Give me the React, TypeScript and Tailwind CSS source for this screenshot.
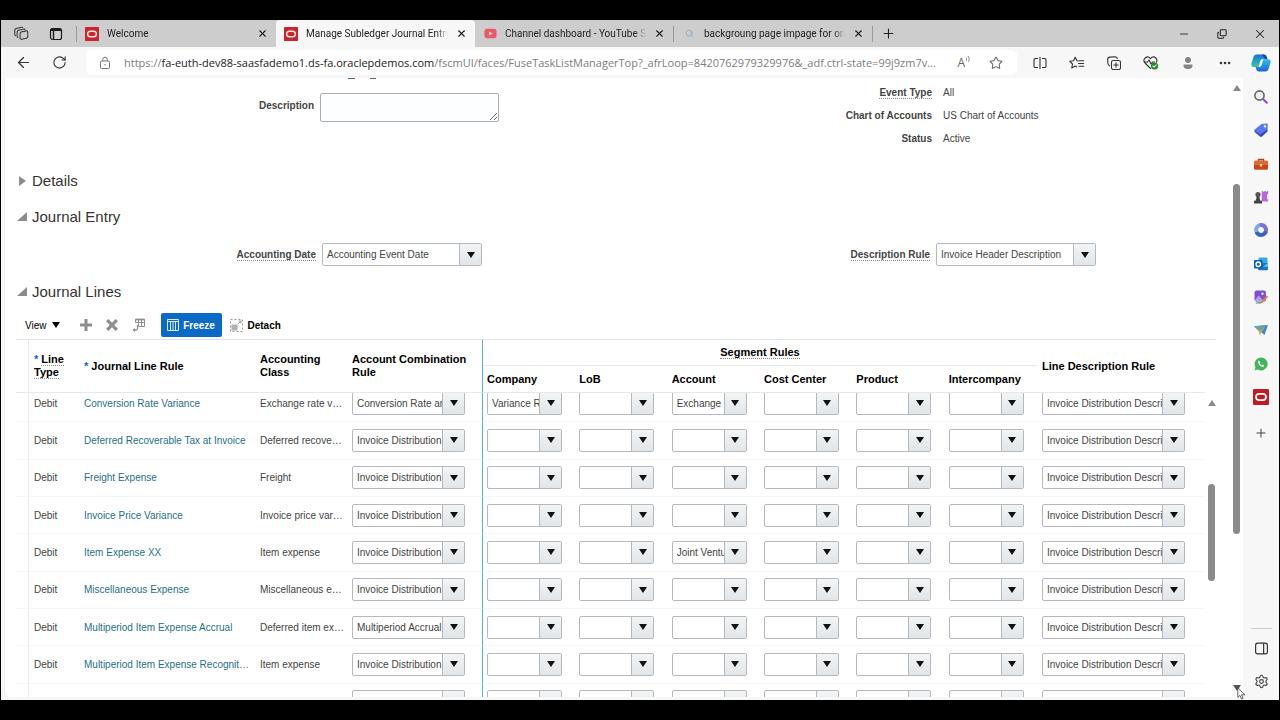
import React from 'react';
import { ArrowLeft, Copy, Ellipsis, Minus, Plus, RotateCw, Search, Settings, Star, X } from 'lucide-react';

// One line of the subledger journal entry rule set
interface JournalLine {
  rule: string;
  accountingClass: string;
  combination: string;
  company?: string;
  account?: string;
}

const journalLines: JournalLine[] = [
  {
    rule: 'Conversion Rate Variance',
    accountingClass: 'Exchange rate variance',
    combination: 'Conversion Rate and Invoice',
    company: 'Variance Rule',
    account: 'Exchange Rate',
  },
  { rule: 'Deferred Recoverable Tax at Invoice', accountingClass: 'Deferred recoverable tax', combination: 'Invoice Distribution Account' },
  { rule: 'Freight Expense', accountingClass: 'Freight', combination: 'Invoice Distribution Account' },
  { rule: 'Invoice Price Variance', accountingClass: 'Invoice price variance', combination: 'Invoice Distribution Account' },
  { rule: 'Item Expense XX', accountingClass: 'Item expense', combination: 'Invoice Distribution Account', account: 'Joint Venture' },
  { rule: 'Miscellaneous Expense', accountingClass: 'Miscellaneous expense', combination: 'Invoice Distribution Account' },
  { rule: 'Multiperiod Item Expense Accrual', accountingClass: 'Deferred item expense', combination: 'Multiperiod Accrual Account' },
  { rule: 'Multiperiod Item Expense Recognition', accountingClass: 'Item expense', combination: 'Invoice Distribution Account' },
  { rule: '', accountingClass: '', combination: '' },
];

const segments = ['Company', 'LoB', 'Account', 'Cost Center', 'Product', 'Intercompany'];

const OracleLogo = ({ className }: { className: string }) => (
  <svg viewBox="0 0 16 16" className={className}>
    <rect width="16" height="16" rx="1" fill="#c9252c" />
    <rect x="3" y="4.8" width="10" height="6.4" rx="3.2" fill="none" stroke="#fbe3e0" strokeWidth="1.7" />
  </svg>
);

const YoutubeLogo = () => (
  <svg viewBox="0 0 14 14" className="size-[13px]">
    <rect x="0.5" y="2" width="13" height="10" rx="2.5" fill="#ea5a66" />
    <path d="M5.5 4.8 9.4 7l-3.9 2.2z" fill="#f6d0d3" />
  </svg>
);

interface BrowserTab {
  title: string;
  icon: React.ReactNode;
  active?: boolean;
  divider?: boolean;
}

const tabs: BrowserTab[] = [
  { title: 'Welcome', icon: <OracleLogo className="size-[14px]" /> },
  { title: 'Manage Subledger Journal Entry Rule Sets', icon: <OracleLogo className="size-[14px]" />, active: true },
  { title: 'Channel dashboard - YouTube Studio', icon: <YoutubeLogo />, divider: true },
  { title: 'backgroung page impage for oracle', icon: <Search className="size-[9px] text-[#7ba7cf]" />, divider: true },
];

const TabStrip = () => (
  <div className="flex h-[27px] shrink-0 items-center bg-[#cdcdcd] text-[#222]">
    <div className="flex h-full w-[75px] shrink-0 items-center gap-[20px] pl-[13px]">
      <button aria-label="Workspaces">
        <svg viewBox="0 0 16 16" className="size-[15px]" fill="none" stroke="#333" strokeWidth="1.1">
          <path d="M7.5 6.3 13 5.2c1-.2 1.7.4 1.7 1.4v4.6c0 1-.5 1.6-1.4 1.8l-5 1.2c-1 .2-1.8-.4-1.8-1.4V8c0-1 .3-1.5 1-1.7z" />
          <path d="M4.5 12.4c-.8-.2-1.2-.8-1.2-1.7V6.5c0-1.1.5-1.8 1.5-2l5.5-1.2c.8-.2 1.4 0 1.7.6" />
          <path d="M2 10.400c-.8-.2-1.200-.8-1.200-1.700V4.600c0-1.100.5-1.800 1.500-2L7.800 1.400c.8-.2 1.400 0 1.700.6" />
        </svg>
      </button>
      <button aria-label="Tab actions">
        <svg viewBox="0 0 14 14" className="size-[14px]" fill="none" stroke="#1c1c1c" strokeWidth="1.2">
          <rect x="1.5" y="1.5" width="11" height="11" rx="2" />
          <path d="M1.5 3.3h11M4.5 4v8.5" strokeWidth="1.4" />
          <path d="M2 2.6h10" strokeWidth="2" />
        </svg>
      </button>
    </div>
    <span className="h-4 w-px bg-[#999]" />
    {tabs.map((tab) => (
      <div
        key={tab.title}
        className={`flex h-full w-[199px] items-center gap-2 pl-2 pr-2 ${tab.active ? 'rounded-t-sm bg-[#f7f7f7]' : ''}`}
      >
        <span className="flex w-[14px] shrink-0 justify-center">{tab.icon}</span>
        <a
          href="#"
          className="w-[146px] overflow-hidden whitespace-nowrap font-[Roboto,sans-serif] text-[10px] leading-4 [mask-image:linear-gradient(to_right,black_92%,transparent)]"
        >
          {tab.title}
        </a>
        <button aria-label={`Close ${tab.title}`} className="ml-auto">
          <X className="size-[11px]" strokeWidth={2.5} />
        </button>
        {tab.divider && <span className="-mr-2 h-4 w-px bg-[#999]" />}
      </div>
    ))}
    <button aria-label="New tab" className="pl-2">
      <Plus className="size-[15px]" strokeWidth={1.75} />
    </button>
    <div className="ml-auto flex items-center">
      <button aria-label="Minimize" className="flex w-[38px] justify-center">
        <Minus className="size-[12px]" strokeWidth={1.75} />
      </button>
      <button aria-label="Restore" className="flex w-[38px] justify-center">
        <Copy className="size-[10px] -scale-y-100" strokeWidth={2.5} />
      </button>
      <button aria-label="Close window" className="flex w-[38px] justify-center">
        <X className="size-[14px]" strokeWidth={1.75} />
      </button>
    </div>
  </div>
);

const CopilotLogo = () => (
  <svg viewBox="0 0 20 18" className="h-[18px] w-5">
    <defs>
      <linearGradient id="copilotA" x1="0" y1="0" x2="0" y2="1">
        <stop offset="0" stopColor="#1a6fd4" />
        <stop offset="0.6" stopColor="#22a9c4" />
        <stop offset="1" stopColor="#4cc08a" />
      </linearGradient>
      <linearGradient id="copilotB" x1="0" y1="0" x2="0" y2="1">
        <stop offset="0" stopColor="#35c3ee" />
        <stop offset="1" stopColor="#1b62d6" />
      </linearGradient>
    </defs>
    <path d="M14.5 17.5H8c-1.5 0-2.3-.8-2.7-2.2L4.5 13H8c1.5 0 2.2-.8 2.7-2.2L12.4 5h4.1c2.5 0 3.7 1.6 3 3.800l-2 6.200c-.5 1.600-1.400 2.500-3 2.500z" fill="url(#copilotB)" />
    <path d="M5.5.5H12c1.5 0 2.3.8 2.7 2.2l.8 2.3H12c-1.5 0-2.2.8-2.7 2.2L7.6 13H3.5C1 13-.2 11.400.5 9.200l2-6.200C3 1.400 3.900.5 5.500.5z" fill="url(#copilotA)" />
    <path d="M11 .5h1.8c1.5 0 2.5.8 2.9 2.2l.8 2.3H14z" fill="#1a45a8" />
  </svg>
);

const AddressBar = () => (
  <div className="flex h-[31px] shrink-0 items-center bg-[#f7f7f7] text-[#333]">
    <div className="flex w-[85px] shrink-0 items-center gap-5 pl-[14px]">
      <button aria-label="Back">
        <ArrowLeft className="size-[17px]" strokeWidth={1.75} />
      </button>
      <button aria-label="Refresh">
        <RotateCw className="size-[15px]" strokeWidth={1.75} />
      </button>
    </div>
    <div className="flex h-[25px] min-w-0 flex-1 items-center rounded-md bg-white pl-3 pr-[14px]">
      <svg viewBox="0 0 14 14" className="size-[14px] shrink-0" fill="none" stroke="#777" strokeWidth="1">
        <rect x="2.5" y="5" width="9" height="7.5" rx="1.2" />
        <path d="M4.7 5V3.5a2.3 2.3 0 0 1 4.6 0V5" />
        <circle cx="7" cy="8.7" r=".7" fill="#777" stroke="none" />
      </svg>
      <span className="ml-3 min-w-0 flex-1 overflow-hidden whitespace-nowrap text-[11px] leading-5 text-[#7d7d7d]">
        https://<span className="text-[#222]">fa-euth-dev88-saasfademo1.ds-fa.oraclepdemos.com</span>
        /fscmUI/faces/FuseTaskListManagerTop?_afrLoop=8420762979329976&amp;_adf.ctrl-state=99j9zm7v...
      </span>
      <button aria-label="Read aloud" className="ml-3 flex items-start text-[12px] leading-4 text-[#666]">
        A
        <svg viewBox="0 0 6 8" className="h-2 w-[6px]" fill="none" stroke="#666" strokeWidth=".8">
          <path d="M1 2.5c.8.9.8 2.2.3 3.2M3 1c1.4 1.6 1.4 4 .5 5.8" />
        </svg>
      </button>
      <button aria-label="Add to favorites" className="ml-[18px]">
        <Star className="size-[14px] text-[#666]" strokeWidth={1.75} />
      </button>
    </div>
    <div className="ml-[4px] flex shrink-0 [&>button]:flex [&>button]:w-[37px] [&>button]:justify-center">
      <button aria-label="Split screen">
        <svg viewBox="0 0 14 14" className="size-[14px]" fill="none" stroke="#333" strokeWidth="1.1">
          <path d="M5 2.5H2.3c-.8 0-1.3.5-1.3 1.3v6.4c0 .8.5 1.3 1.3 1.3H5M9 2.5h2.7c.8 0 1.3.5 1.3 1.3v6.4c0 .8-.5 1.3-1.3 1.3H9M7 1v12" />
        </svg>
      </button>
      <button aria-label="Favorites">
        <svg viewBox="0 0 16 14" className="h-[14px] w-4" fill="none" stroke="#333" strokeWidth="1.1" strokeLinejoin="round" strokeLinecap="round">
          <path d="M9 5 8 4.800 6.200 1.200 4.500 4.800.8 5.300l2.700 2.700-.7 3.900 3.400-1.800 1.500.8M10 4.800h4.700M9.500 7.500h5.200M10 10.200h4.700" />
        </svg>
      </button>
      <button aria-label="Collections">
        <svg viewBox="0 0 14 14" className="size-[14px]" fill="none" stroke="#333" strokeWidth="1.1" strokeLinecap="round">
          <rect x="4.5" y="4.5" width="9" height="9" rx="1.8" />
          <path d="M9 6.800v4.400M6.800 9h4.400M2.500 9.800C1.500 9.300 1 8.300.9 7.200L.7 3.600C.6 2.200 1.500 1.200 2.900 1.100L8 .8c1.200 0 2 .6 2.300 1.700" />
        </svg>
      </button>
      <button aria-label="Browser essentials">
        <svg viewBox="0 0 16 14" className="h-[14px] w-4" fill="none" stroke="#333" strokeWidth="1.1" strokeLinecap="round" strokeLinejoin="round">
          <path d="M7.500 12.500 2 7C.7 5.500.8 3.300 2.200 2 3.800.6 6 .9 7.500 2.600 9 .9 11.200.6 12.800 2c1.200 1.200 1.400 3 .6 4.300M1.500 6h3l1.500-2 2 4 1.500-2h2" />
          <circle cx="11.5" cy="10" r="3.6" fill="#1c8a28" stroke="none" />
          <path d="m9.900 10 1.200 1.200 2-2.200" stroke="#fff" />
        </svg>
      </button>
      <button aria-label="Profile">
        <svg viewBox="0 0 14 14" className="size-[14px]" fill="#858585">
          <circle cx="7" cy="4" r="3" />
          <path d="M2.500 8.500h9c.4 3-1.400 4.500-4.500 4.500s-4.900-1.500-4.500-4.500z" />
        </svg>
      </button>
      <button aria-label="Settings and more">
        <Ellipsis className="size-[14px]" strokeWidth={2.5} />
      </button>
    </div>
    <button aria-label="Copilot" className="flex w-9 shrink-0 justify-center">
      <CopilotLogo />
    </button>
  </div>
);

// Edge sidebar shortcuts, top to bottom
const sidebarApps = [
  {
    name: 'Search',
    icon: (
      <>
        <circle cx="6.5" cy="6.5" r="4.6" fill="#e9eef2" stroke="#666" strokeWidth="1.6" />
        <path d="m10.200 10.200 3.600 3.600" stroke="#9a4fc9" strokeWidth="2.2" strokeLinecap="round" />
      </>
    ),
  },
  {
    name: 'Shopping',
    icon: (
      <>
        <path d="M8.500 2 13.500 1.500c.8 0 1.300.5 1.300 1.300l-.3 5c0 .5-.2.900-.5 1.200L9 13.900c-.6.6-1.400.6-2 0L1.700 9.500c-.6-.6-.6-1.400 0-2z" fill="#5a78ea" />
        <path d="M1.500 8.500 7 12.500l7.500-5v2L9 14.500c-.6.6-1.400.6-2 0L1.700 10z" fill="#3a45c4" />
        <circle cx="12" cy="4.3" r="1.2" fill="#e6ecff" />
      </>
    ),
  },
  {
    name: 'Tools',
    icon: (
      <>
        <path d="M5.500 5V3.500h5V5" fill="none" stroke="#9b4a1d" strokeWidth="1.3" />
        <rect x="1" y="4.8" width="14" height="9" rx="1.5" fill="#c4481c" />
        <path d="M1 6.300c0-1 .6-1.500 1.500-1.500h11c.9 0 1.500.5 1.500 1.500V9H1z" fill="#dd6a35" />
        <rect x="6.8" y="8" width="2.4" height="2.5" fill="#ffd27a" />
      </>
    ),
  },
  {
    name: 'Games',
    icon: (
      <>
        <path d="M8.800 2h1.400v1h1V2h1.600v1h1V2h1.400v2.500L14 5.800v3.400l1.200 2v1.300H8.800z" fill="#b868dc" />
        <circle cx="5" cy="5.5" r="2.6" fill="#555" />
        <path d="M3 7.800h4l-.6 1 1 3H9v2.700H1v-2.700h1.500l1.100-3z" fill="#444" />
      </>
    ),
  },
  {
    name: 'Microsoft 365',
    icon: (
      <g fill="none" strokeWidth="4">
        <path d="M3.300 9.500A5 5 0 0 1 8 3" stroke="#7aa7e8" />
        <path d="M7 3.100A5 5 0 0 1 12 11" stroke="#7d6fd0" />
        <path d="M12.800 9.500A5 5 0 0 1 3.400 9.800" stroke="#3b62bd" />
      </g>
    ),
  },
  {
    name: 'Outlook',
    icon: (
      <>
        <rect x="5.5" y="1.5" width="9" height="8" rx="1" fill="#38a9e8" />
        <path d="M5 7h10v6c0 .8-.5 1.200-1.200 1.200H6.200C5.400 14.200 5 13.800 5 13z" fill="#1b75c8" />
        <path d="M10 10.500 15 7v4z" fill="#5cc8f5" />
        <rect x="1" y="4" width="8.5" height="8.5" rx="1" fill="#0f5eae" />
        <circle cx="5.25" cy="8.25" r="2.2" fill="none" stroke="#fff" strokeWidth="1.4" />
      </>
    ),
  },
  {
    name: 'Image Creator',
    icon: (
      <>
        <rect x="1.5" y="1.5" width="11.5" height="11" rx="2" fill="#7a52d1" />
        <path d="m1.800 11 4-4.500 5 6h-8c-.7 0-1-.6-1-1.500z" fill="#b99cf2" />
        <circle cx="9.5" cy="4.8" r="1.2" fill="#e9dcff" />
        <path d="m8 12.800 6-6.300 1.300 1.200-6 6.300-2 .5z" fill="#e28a3c" />
        <path d="M3 14.300c1.500-1.500 3 .5 5-.8" stroke="#44a06a" strokeWidth="1.2" fill="none" />
      </>
    ),
  },
  {
    name: 'Drop',
    icon: (
      <>
        <path d="M1 4.200 15 3l-3.500 10-3-2.500z" fill="#3f86cf" />
        <path d="M1 4.200 15 3 5.800 9z" fill="#62a5a8" />
        <path d="M5.800 9 12 5l-3.500 5.500-1.800 2.500z" fill="#c9a54a" />
      </>
    ),
  },
  {
    name: 'WhatsApp',
    icon: (
      <>
        <path d="M8 1.500a6.500 6.500 0 1 1-3.200 12.100L1.500 14.500l1-3.200A6.500 6.500 0 0 1 8 1.500z" fill="#3fb658" />
        <path d="M5.800 4.500c-.9.500-1 1.600-.4 2.700.8 1.700 1.900 2.800 3.600 3.500 1 .4 2 .1 2.300-.9l-1.600-1.200-.9.800c-1-.5-1.700-1.200-2.100-2.200l.7-.8z" fill="#fff" />
      </>
    ),
  },
  {
    name: 'Oracle',
    icon: (
      <>
        <rect width="16" height="16" rx="1" fill="#c41a22" />
        <rect x="3" y="4.8" width="10" height="6.4" rx="3.2" fill="none" stroke="#fff" strokeWidth="1.7" />
      </>
    ),
  },
];

const Sidebar = () => (
  <aside className="flex w-9 shrink-0 flex-col items-center bg-[#f7f7f7] pt-[9px] text-[#444]">
    <div className="flex h-[320px] shrink-0 flex-col justify-between">
      {sidebarApps.map((app) => (
        <button key={app.name} aria-label={app.name} className="flex h-5 items-center">
          <svg viewBox="0 0 16 16" className="size-4">{app.icon}</svg>
        </button>
      ))}
    </div>
    <button aria-label="Customize" className="mt-[19px]">
      <Plus className="size-[14px]" strokeWidth={1.75} />
    </button>
    <div className="mt-auto flex flex-col items-center gap-[18px] border-t border-[#ccc] px-[3px] pb-[11px] pt-3">
      <button aria-label="Hide sidebar">
        <svg viewBox="0 0 14 14" className="size-[15px]" fill="none" stroke="#333" strokeWidth="1.1">
          <rect x="1.5" y="2" width="11" height="10" rx="2" />
          <path d="M9 2v10" />
        </svg>
      </button>
      <button aria-label="Sidebar settings">
        <Settings className="size-[15px]" strokeWidth={1.75} />
      </button>
    </div>
  </aside>
);

const Combo = ({ id, label, value = '', className }: { id?: string; label?: string; value?: string; className: string }) => (
  <div className={`grid h-[23px] grid-cols-[minmax(0,1fr)_22px] overflow-hidden rounded-[2px] border border-[#b4b9bd] bg-white ${className}`}>
    <select
      id={id}
      aria-label={label}
      className="col-start-1 col-end-3 row-start-1 h-[21px] w-full appearance-none overflow-hidden pl-1 pr-[22px] text-[10px] leading-[21px] text-[#444]"
    >
      <option>{value}</option>
    </select>
    <span className="pointer-events-none col-start-2 row-start-1 flex items-center justify-center border-l border-[#b4b9bd] bg-linear-to-b from-[#f2f4f5] to-[#e2e6e9]">
      <svg viewBox="0 0 8 6" className="h-[6px] w-2" fill="#111">
        <path d="M0 0h8L4 6z" />
      </svg>
    </span>
  </div>
);

const SectionHeading = ({ title, open, className }: { title: string; open?: boolean; className: string }) => (
  <h2 className={`flex h-5 items-center pl-3 text-[15px] text-[#333] ${className}`}>
    <button className="flex items-center gap-[5px]">
      <svg viewBox="0 0 10 10" className="size-[10px]" fill="#8c8c8c">
        <path d={open ? 'M10 0v9H0z' : 'M2 0v10l7-5z'} />
      </svg>
      {title}
    </button>
  </h2>
);

const SummaryRow = ({ label, value, dotted }: { label: string; value: string; dotted?: boolean }) => (
  <div className="flex h-[23px] items-center gap-[11px]">
    <dt className="w-[313px] shrink-0 text-right font-bold">
      <span className={dotted ? 'border-b border-dotted border-[#888]' : ''}>{label}</span>
    </dt>
    <dd>{value}</dd>
  </div>
);

const TableToolbar = () => (
  <div className="mt-[11px] flex h-6 items-center pl-5 text-[10px] text-black">
    <button className="flex items-center gap-[5px]">
      View
      <svg viewBox="0 0 8 6" className="h-[6px] w-2">
        <path d="M0 0h8L4 6z" />
      </svg>
    </button>
    <button aria-label="Add row" className="ml-5">
      <svg viewBox="0 0 12 12" className="size-3" fill="#8e8e8e">
        <path d="M4.500 0h3v4.500H12v3H7.500V12h-3V7.500H0v-3h4.500z" />
      </svg>
    </button>
    <button aria-label="Delete row" className="ml-[14px]">
      <svg viewBox="0 0 12 12" className="size-3" fill="none" stroke="#8e8e8e" strokeWidth="3.2">
        <path d="m1.200 1.200 9.600 9.600M10.800 1.200l-9.600 9.600" />
      </svg>
    </button>
    <button aria-label="Duplicate row" className="ml-[14px]">
      <svg viewBox="0 0 14 14" className="size-[14px]" fill="none" stroke="#8e8e8e">
        <path d="M3.500 1.500h9v7h-6M3.500 1.500v3M3.500 4.500h9M6.500 1.500v7M9.500 1.500v7" />
        <path d="M3.500 1.500h9" strokeWidth="1.8" />
        <path d="M5.500 7v3.500c0 1-.5 1.500-1.500 1.500H1.500" strokeWidth="1.3" />
        <path d="m3 10-2.500 2L3 14z" fill="#8e8e8e" stroke="none" />
      </svg>
    </button>
    <button className="ml-[15px] flex h-6 w-[61px] items-center justify-center gap-1 rounded-[2px] bg-[#0b6bc4] font-bold text-white">
      <svg viewBox="0 0 12 12" className="size-3" fill="none" stroke="#d9ebfb">
        <path d="M.5.5h11v11H.5zM.5 2.500h11M3.500 2.500v9M6 2.500v9M8.500 2.500v9" />
      </svg>
      Freeze
    </button>
    <button className="ml-2 flex items-center gap-[5px] font-bold">
      <svg viewBox="0 0 13 13" className="size-[13px]" fill="none" stroke="#999">
        <rect x=".5" y=".5" width="12" height="12" strokeDasharray="2 2" />
        <rect x="1.5" y="5.5" width="6" height="6" fill="#b0b0b0" stroke="none" />
        <path d="m8 5 3-3M8.500 2h2.500v2.500" />
      </svg>
      Detach
    </button>
  </div>
);

// Shared by the header table and the scrolled body table
const Columns = () => (
  <colgroup>
    <col className="w-[13px]" />
    <col className="w-[50px]" />
    <col className="w-[176px]" />
    <col className="w-[92px]" />
    <col className="w-[136px]" />
    {segments.map((segment) => (
      <col key={segment} />
    ))}
    <col className="w-[168px]" />
  </colgroup>
);

const JournalLinesTable = () => (
  <div className="ml-[11px] mr-[17px] mt-[2px] flex min-h-0 flex-1 flex-col border-t border-[#dfe4e7]">
    <div className="pr-[11px]">
      <table className="w-full table-fixed border-separate border-spacing-0 text-left text-[11px] leading-[13px] text-black">
        <Columns />
        <thead>
          <tr className="h-[26px]">
            <th rowSpan={2} className="border-b border-r border-[#e6e9eb]" />
            <th rowSpan={2} className="border-b border-[#e6e9eb] px-[5px]">
              <span className="text-[#0b6bc4]">*</span>{' '}
              <span className="border-b border-dotted border-[#888]">Line Type</span>
            </th>
            <th rowSpan={2} className="border-b border-[#e6e9eb] px-[5px]">
              <span className="text-[#0b6bc4]">*</span> Journal Line Rule
            </th>
            <th rowSpan={2} className="border-b border-[#e6e9eb] px-[5px]">Accounting Class</th>
            <th rowSpan={2} className="border-b border-r border-b-[#e6e9eb] border-r-[#58b4bf] px-[5px]">
              Account Combination Rule
            </th>
            <th colSpan={6} className="border-b border-[#e6e9eb] text-center">
              <span className="border-b border-dotted border-[#888]">Segment Rules</span>
            </th>
            <th rowSpan={2} className="border-b border-[#e6e9eb] px-[5px]">Line Description Rule</th>
          </tr>
          <tr className="h-[27px]">
            {segments.map((segment) => (
              <th key={segment} className="border-b border-[#e6e9eb] px-1">{segment}</th>
            ))}
          </tr>
        </thead>
      </table>
    </div>

    <div className="flex min-h-0 flex-1">
      <div className="min-w-0 flex-1 overflow-hidden">
        <table className="-mt-2 h-[336px] w-full table-fixed border-separate border-spacing-0 text-[10px] text-[#444]">
          <Columns />
          <tbody className="[&_td]:border-b [&_td]:border-b-[#f6f7f7] [&_td]:p-0">
            {journalLines.map((line, index) => (
              <tr key={index}>
                <td className="border-r border-r-[#e6e9eb]" />
                <td>
                  <span className="px-[5px]">{line.rule && 'Debit'}</span>
                </td>
                <td>
                  <a href="#" className="mx-[5px] block truncate text-[#1f7087]">{line.rule}</a>
                </td>
                <td>
                  <span className="ml-[5px] mr-[3px] block truncate">{line.accountingClass}</span>
                </td>
                <td className="border-r border-r-[#58b4bf]">
                  <Combo label="Account Combination Rule" value={line.combination} className="ml-[5px] w-[113px]" />
                </td>
                {segments.map((segment) => (
                  <td key={segment}>
                    <Combo
                      label={segment}
                      value={segment === 'Company' ? line.company : segment === 'Account' ? line.account : ''}
                      className="ml-1 w-[75px]"
                    />
                  </td>
                ))}
                <td>
                  <Combo
                    label="Line Description Rule"
                    value={line.rule && 'Invoice Distribution Description'}
                    className="ml-[5px] w-[143px]"
                  />
                </td>
              </tr>
            ))}
          </tbody>
        </table>
      </div>
      <div className="flex w-[11px] shrink-0 flex-col items-center pl-[2px] pt-[7px]">
        <svg viewBox="0 0 8 6" className="h-[6px] w-2" fill="#8a8a8a">
          <path d="M0 6h8L4 0z" />
        </svg>
        <div className="mt-[78px] h-[97px] w-[7px] shrink-0 rounded-full bg-[#8a8a8a]" />
      </div>
    </div>
  </div>
);

const RuleSetPage = () => (
  <main className="flex min-w-0 flex-1 flex-col overflow-hidden font-['Liberation_Sans',Arial,sans-serif]">
    <div className="grid grid-cols-2 text-[10px] text-[#444]">
      <div>
        <svg viewBox="0 0 30 2" className="ml-[343px] h-[2px] w-[30px]" fill="none" stroke="#666">
          <path d="M0 .5h7M22 .5h6" />
        </svg>
        <div className="mt-[13px] flex gap-[6px]">
          <label htmlFor="description" className="w-[309px] shrink-0 pt-[5px] text-right font-bold">Description</label>
          <textarea id="description" className="h-[29px] w-[179px] rounded-[2px] border border-[#a9aeb2] bg-[#fcfeff]" />
        </div>
      </div>
      <dl className="pt-[3px]">
        <SummaryRow label="Event Type" value="All" dotted />
        <SummaryRow label="Chart of Accounts" value="US Chart of Accounts" />
        <SummaryRow label="Status" value="Active" />
      </dl>
    </div>

    <SectionHeading title="Details" className="mt-[21px]" />
    <SectionHeading title="Journal Entry" open className="mt-4" />
    <div className="mt-4 grid grid-cols-2 text-[10px] text-[#444]">
      <div className="flex items-center gap-[6px]">
        <label htmlFor="accounting-date" className="w-[311px] shrink-0 text-right font-bold">
          <span className="border-b border-dotted border-[#888]">Accounting Date</span>
        </label>
        <Combo id="accounting-date" value="Accounting Event Date" className="w-[160px]" />
      </div>
      <div className="flex items-center gap-[6px]">
        <label htmlFor="description-rule" className="w-[311px] shrink-0 text-right font-bold">
          <span className="border-b border-dotted border-[#888]">Description Rule</span>
        </label>
        <Combo id="description-rule" value="Invoice Header Description" className="w-[160px]" />
      </div>
    </div>

    <SectionHeading title="Journal Lines" open className="mt-4" />
    <TableToolbar />
    <JournalLinesTable />
  </main>
);

export default function App() {
  return (
    <div className="h-screen overflow-hidden bg-black px-px py-5 font-['Open_Sans','Segoe_UI',sans-serif]">
      <div className="flex h-full flex-col bg-[#f7f7f7]">
        <TabStrip />
        <AddressBar />
        <div className="flex min-h-0 flex-1">
          <div className="mb-[3px] ml-[3px] flex min-w-0 flex-1 rounded-b-md border-l border-[#ececec] bg-white">
            <RuleSetPage />
            <div className="relative flex w-[10px] shrink-0 flex-col items-center pb-[6px] pr-[3px] pt-[7px]">
              <svg viewBox="0 0 8 6" className="h-[6px] w-2 shrink-0" fill="#8a8a8a">
                <path d="M0 6h8L4 0z" />
              </svg>
              <div className="mt-[93px] h-[350px] w-[7px] rounded-full bg-[#8a8a8a]" />
              <svg viewBox="0 0 8 6" className="mt-auto h-[6px] w-2 shrink-0" fill="#555">
                <path d="M0 0h8L4 6z" />
              </svg>
              {/* mouse pointer resting on the scroll button */}
              <svg viewBox="0 0 9 14" className="absolute -bottom-[3px] left-[4px] h-[13px] w-[9px]" fill="#fff" stroke="#333" strokeWidth=".8">
                <path d="M.5.8v10.400l2.400-2.200 1.600 3.900 1.700-.7-1.600-3.800h3.600z" />
              </svg>
            </div>
          </div>
          <Sidebar />
        </div>
      </div>
    </div>
  );
}
